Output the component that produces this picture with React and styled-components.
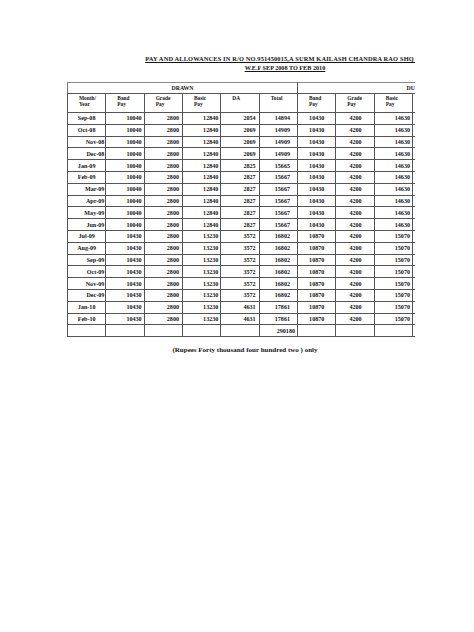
import styled, { createGlobalStyle } from "styled-components";

const GlobalStyle = createGlobalStyle`
  html, body {
    margin: 0;
    padding: 0;
    background: #ffffff;
  }
  body {
    font-family: "Liberation Serif", "Times New Roman", serif;
    color: #141414;
  }
`;

const Page = styled.div`
  width: 415px;
  height: 632px;
  overflow: hidden;
  background: #ffffff;
`;

const Sheet = styled.div`
  width: 700px;
  padding: 54px 0 0 67px;
  font-weight: 700;
`;

const Title = styled.div`
  width: 436px;
  display: flex;
  flex-direction: column;
  align-items: center;
  margin-bottom: 10px;
`;

const TitleLine = styled.div`
  height: 9px;
  font-size: ${(p) => p.$size}px;
  line-height: 9px;
  letter-spacing: ${(p) => p.$spacing || 0}px;
  text-decoration: underline;
  white-space: nowrap;
`;

const Table = styled.table`
  border-collapse: collapse;
  table-layout: fixed;
  width: 460px;
`;

const Col = styled.col`
  width: 38.33px;
`;

const BandCell = styled.td`
  height: 10px;
  padding: 0;
  font-size: 5.8px;
  line-height: 10px;
  text-align: center;
  vertical-align: bottom;
  border-top: 1px solid #8a8a8a;
  border-left: ${(p) => (p.$first ? "1px solid #777" : "none")};
  border-right: ${(p) => (p.$split ? "1px solid #555" : "none")};
  border-bottom: 1px solid #555;
`;

const HeadCell = styled.th`
  height: 16px;
  padding: 2px 0 0 11px;
  font-size: 5.4px;
  line-height: 5.8px;
  font-weight: 700;
  text-align: left;
  vertical-align: top;
  white-space: pre-line;
  border: 1px solid #555;
`;

const Cell = styled.td`
  height: 10.8px;
  padding: 0 ${(p) => p.$pad ?? 3}px 0 ${(p) => (p.$align === "center" ? 0 : 1)}px;
  font-size: 6.1px;
  line-height: 10px;
  text-align: ${(p) => p.$align || "right"};
  vertical-align: middle;
  white-space: nowrap;
  overflow: hidden;
  border: 1px solid #555;
`;

const Footer = styled.div`
  width: 356px;
  margin-top: 9px;
  text-align: center;
  font-size: 7px;
  white-space: nowrap;
`;

// the sheet is cut at the page edge, so the last DUE columns stay out of sight
const headers = [
  "Month/\nYear",
  "Band\nPay",
  "Grade\nPay",
  "Basic\nPay",
  "DA",
  "Total",
  "Band\nPay",
  "Grade\nPay",
  "Basic\nPay",
  "",
  "",
  "",
];

const pads = [10, 2, 3, 2, 3, 7, 11, 12, 2];

const rows = [
  ["Sep-08", "c", 10040, 2800, 12840, 2054, 14894, 10430, 4200, 14630],
  ["Oct-08", "c", 10040, 2800, 12840, 2069, 14909, 10430, 4200, 14630],
  ["Nov-08", "r", 10040, 2800, 12840, 2069, 14909, 10430, 4200, 14630],
  ["Dec-08", "r", 10040, 2800, 12840, 2069, 14909, 10430, 4200, 14630],
  ["Jan-09", "c", 10040, 2800, 12840, 2825, 15665, 10430, 4200, 14630],
  ["Feb-09", "c", 10040, 2800, 12840, 2827, 15667, 10430, 4200, 14630],
  ["Mar-09", "r", 10040, 2800, 12840, 2827, 15667, 10430, 4200, 14630],
  ["Apr-09", "r", 10040, 2800, 12840, 2827, 15667, 10430, 4200, 14630],
  ["May-09", "r", 10040, 2800, 12840, 2827, 15667, 10430, 4200, 14630],
  ["Jun-09", "r", 10040, 2800, 12840, 2827, 15667, 10430, 4200, 14630],
  ["Jul-09", "c", 10430, 2800, 13230, 3572, 16802, 10870, 4200, 15070],
  ["Aug-09", "c", 10430, 2800, 13230, 3572, 16802, 10870, 4200, 15070],
  ["Sep-09", "r", 10430, 2800, 13230, 3572, 16802, 10870, 4200, 15070],
  ["Oct-09", "r", 10430, 2800, 13230, 3572, 16802, 10870, 4200, 15070],
  ["Nov-09", "r", 10430, 2800, 13230, 3572, 16802, 10870, 4200, 15070],
  ["Dec-09", "r", 10430, 2800, 13230, 3572, 16802, 10870, 4200, 15070],
  ["Jan-10", "c", 10430, 2800, 13230, 4631, 17861, 10870, 4200, 15070],
  ["Feb-10", "c", 10430, 2800, 13230, 4631, 17861, 10870, 4200, 15070],
];

export default function App() {
  return (
    <Page>
      <GlobalStyle />
      <Sheet>
        <Title>
          <TitleLine $size={6.4} $spacing={0.14}>
            PAY AND ALLOWANCES IN R/O NO.951450015,A SURM KAILASH CHANDRA RAO SHQ BN
          </TitleLine>
          <TitleLine $size={6.2}>W.E.F SEP 2008 TO FEB 2010</TitleLine>
        </Title>

        <Table>
          <colgroup>
            {headers.map((h, i) => (
              <Col key={i} />
            ))}
          </colgroup>
          <thead>
            <tr>
              <BandCell colSpan={6} $first $split>
                DRAWN
              </BandCell>
              <BandCell colSpan={6}>DUE</BandCell>
            </tr>
            <tr>
              {headers.map((h, i) => (
                <HeadCell key={i}>{h}</HeadCell>
              ))}
            </tr>
          </thead>
          <tbody>
            {rows.map(([month, align, ...vals]) => (
              <tr key={month}>
                <Cell $align={align === "c" ? "center" : "right"} $pad={align === "c" ? 0 : 1}>
                  {month}
                </Cell>
                {vals.map((v, i) => (
                  <Cell key={i} $pad={pads[i + 1]}>
                    {v}
                  </Cell>
                ))}
                <Cell />
                <Cell />
                <Cell />
              </tr>
            ))}
            <tr>
              {headers.map((h, i) => (
                <Cell key={i} $pad={2}>
                  {i === 5 ? "290180" : ""}
                </Cell>
              ))}
            </tr>
          </tbody>
        </Table>

        <Footer>(Rupees Forty thousand four hundred two ) only</Footer>
      </Sheet>
    </Page>
  );
}
